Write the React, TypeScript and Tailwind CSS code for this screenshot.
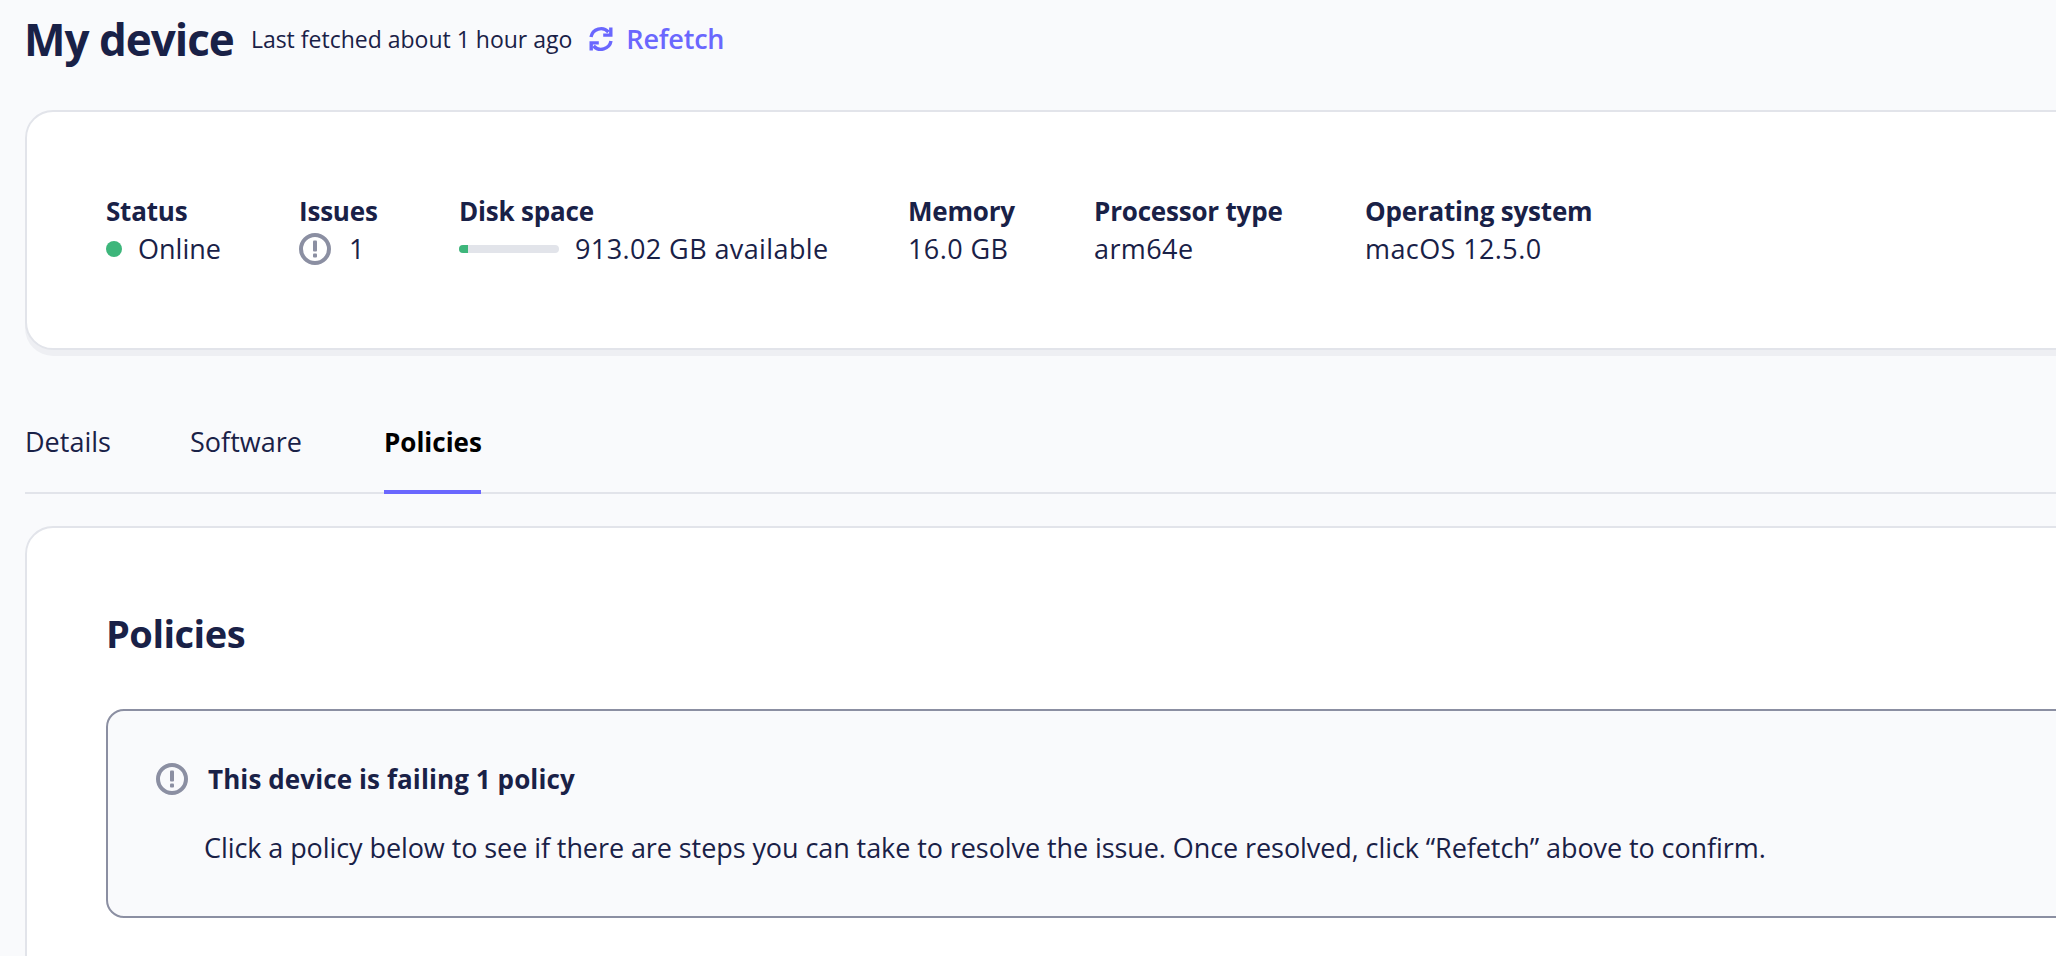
const stats = [
  { label: "Memory", value: "16.0 GB", width: "w-[106px]" },
  { label: "Processor type", value: "arm64e", width: "w-[191px]" },
  { label: "Operating system", value: "macOS 12.5.0", width: "w-[229px]" },
];

function IssueIcon() {
  return (
    <svg width="32" height="32" viewBox="0 0 32 32" className="shrink-0">
      <circle cx="16" cy="16" r="14" fill="none" stroke="#8b8fa2" strokeWidth="4" />
      <rect x="14" y="7.5" width="4" height="11" rx="1" fill="#8b8fa2" />
      <rect x="14" y="20.5" width="4" height="4" rx="1" fill="#8b8fa2" />
    </svg>
  );
}

function RefetchIcon() {
  return (
    <svg width="26" height="26" viewBox="0 0 26 26" fill="none" stroke="#6a67fe" strokeWidth="3.4" strokeLinecap="butt" strokeLinejoin="miter" className="shrink-0">
      <path d="M3 11A10.2 10.2 0 0 1 20.5 6" />
      <path d="M22.8 1.5v7.6h-7.6" />
      <path d="M23 15A10.2 10.2 0 0 1 5.5 20" />
      <path d="M3.2 24.5v-7.6h7.6" />
    </svg>
  );
}

export default function App() {
  return (
    <div className="h-[956px] overflow-hidden bg-[#f9fafc] pl-[25px] font-['Open_Sans',sans-serif] text-[#192147]">
      <div className="flex h-[110px] items-start">
        <h1 className="-ml-px mt-[11px] text-[44px] font-bold leading-[56px] tracking-[-1px]">My device</h1>
        <span className="ml-[17px] mt-[25px] text-[23px] leading-[28px]">Last fetched about 1 hour ago</span>
        <span className="ml-[16px] mt-[25px] flex items-center gap-[12px] text-[27px] font-semibold leading-[28px] tracking-[-0.2px] text-[#6a67fe]">
          <RefetchIcon />
          Refetch
        </span>
      </div>

      <div className="flex h-[240px] w-[2100px] items-center rounded-[28px] border-2 border-[#e2e4ea] bg-white pl-[79px] shadow-[0_6px_0_#eeeff3]">
        <div className="flex gap-20 whitespace-nowrap text-[27px] leading-[38px]">
          <div className="w-[113px]">
            <div className="text-[26px] font-bold tracking-[-0.2px]">Status</div>
            <div className="flex items-center gap-4">
              <span className="size-4 shrink-0 rounded-full bg-[#3db67b]" />
              Online
            </div>
          </div>
          <div className="w-[80px]">
            <div className="text-[26px] font-bold tracking-[-0.2px]">Issues</div>
            <div className="flex items-center gap-[18px]">
              <IssueIcon />1
            </div>
          </div>
          <div className="w-[369px]">
            <div className="text-[26px] font-bold tracking-[-0.2px]">Disk space</div>
            <div className="flex items-center gap-4">
              <div className="h-2 w-[100px] shrink-0 overflow-hidden rounded-full bg-[#e2e4ea]">
                <div className="h-full w-[9px] bg-[#3db67b]" />
              </div>
              <span className="tracking-[0.4px]">913.02 GB available</span>
            </div>
          </div>
          {stats.map((s) => (
            <div key={s.label} className={s.width}>
              <div className="text-[26px] font-bold tracking-[-0.2px]">{s.label}</div>
              <div className="tracking-[0.4px]">{s.value}</div>
            </div>
          ))}
        </div>
      </div>

      <div className="mt-[66px] flex h-[78px] gap-20 border-b-2 border-[#e2e4ea] pt-[7px] text-[27px] leading-[38px]">
        <div className="w-[85px]">Details</div>
        <div className="w-[114px]">Software</div>
        <div className="h-[71px] w-[97px] border-b-4 border-[#6a67fe] text-[26px] font-bold text-black">Policies</div>
      </div>

      <div className="mt-[32px] h-[600px] w-[2100px] rounded-[28px] border-2 border-[#e2e4ea] bg-white pl-[79px] pt-[80px]">
        <h2 className="text-[38px] font-bold leading-[50px] tracking-[-0.5px]">Policies</h2>
        <div className="mt-[51px] h-[209px] rounded-[18px] border-2 border-[#8b8fa2] bg-[#f9fafc] pl-[48px] pt-[51px]">
          <div className="flex items-center gap-[20px] text-[26px] font-bold leading-[34px] tracking-[0.1px]">
            <IssueIcon />
            This device is failing 1 policy
          </div>
          <p className="ml-[48px] mt-[35px] text-[27px] leading-[34px] tracking-[-0.08px]">
            Click a policy below to see if there are steps you can take to resolve the issue. Once resolved, click “Refetch” above to confirm.
          </p>
        </div>
      </div>
    </div>
  );
}
